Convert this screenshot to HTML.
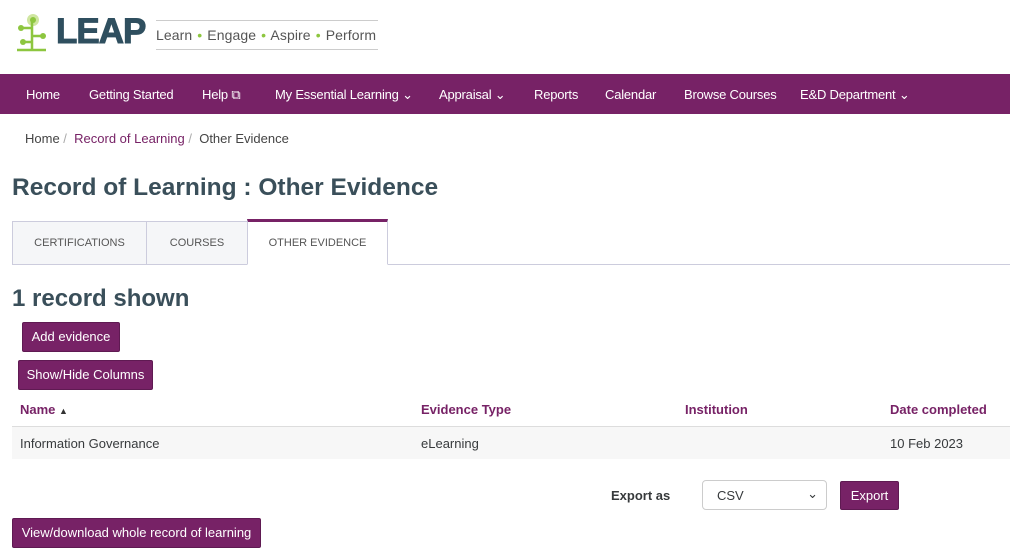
<!DOCTYPE html>
<html><head><meta charset="utf-8"><style>
*{box-sizing:border-box;margin:0;padding:0}
body{width:1010px;height:556px;overflow:hidden;background:#fff;font-family:"Liberation Sans",sans-serif;color:#373a3c;position:relative}
.a{position:absolute;white-space:nowrap}
.nav{position:absolute;top:74px;left:0;width:1010px;height:40px;background:#772266}
.nav span{position:absolute;top:13px;color:#fff;font-size:13px;letter-spacing:-0.2px}
.btn{position:absolute;background:#772266;color:#fff;font-size:13px;border:1px solid #5f1a52;border-radius:2px;text-align:center}
.th{position:absolute;top:402px;color:#772266;font-weight:bold;font-size:13px}
.tab{position:absolute;top:221px;height:44px;background:#f5f6f8;border:1px solid #ccd;font-size:11px;color:#555;text-align:center;line-height:42px}
</style></head><body>
<svg class="a" style="left:14px;top:14px" width="34" height="38" viewBox="0 0 34 38">
<circle cx="19" cy="6" r="6" fill="#cfe6a0"/>
<g stroke="#8dc63f" stroke-width="2.5" fill="none"><path d="M18 6V36M18 14H8M18 22H28M18 28H10M3 36H32"/></g>
<g fill="#8dc63f"><circle cx="19" cy="6" r="3"/><circle cx="7" cy="14" r="3"/><circle cx="29" cy="22" r="3"/><circle cx="9" cy="28" r="3"/></g>
</svg>
<div class="a" style="left:56px;top:12px;font-size:35px;font-weight:bold;color:#2f4f5f;letter-spacing:-1px;-webkit-text-stroke:1px #2f4f5f">LEAP</div>
<div class="a" style="left:156px;top:20px;width:222px;height:1px;background:#ccc"></div>
<div class="a" style="left:156px;top:49px;width:222px;height:1px;background:#ccc"></div>
<div class="a" style="left:156px;top:27px;font-size:14px;color:#555;letter-spacing:0.1px;word-spacing:1px">Learn <span style="color:#8dc63f">•</span> Engage <span style="color:#8dc63f">•</span> Aspire <span style="color:#8dc63f">•</span> Perform</div>
<div class="nav">
<span style="left:26px">Home</span><span style="left:89px">Getting Started</span><span style="left:202px">Help ⧉</span>
<span style="left:275px">My Essential Learning ⌄</span><span style="left:439px">Appraisal ⌄</span><span style="left:534px">Reports</span>
<span style="left:605px">Calendar</span><span style="left:684px">Browse Courses</span><span style="left:800px">E&amp;D Department ⌄</span>
</div>
<div class="a" style="left:25px;top:131px;font-size:13px;color:#444">Home <span style="color:#aaa">/</span>&nbsp; <span style="color:#772266">Record of Learning</span> <span style="color:#aaa">/</span>&nbsp; Other Evidence</div>
<div class="a" style="left:12px;top:174px;font-size:24.5px;font-weight:bold;color:#3a4f5a">Record of Learning : Other Evidence</div>
<div class="a" style="left:12px;top:264px;width:998px;height:1px;background:#ccd"></div>
<div class="tab" style="left:12px;width:135px">CERTIFICATIONS</div>
<div class="tab" style="left:146px;width:102px">COURSES</div>
<div class="tab" style="left:247px;width:141px;top:219px;height:46px;background:#fff;border-top:3px solid #772266;border-bottom:1px solid #fff">OTHER EVIDENCE</div>
<div class="a" style="left:12px;top:285px;font-size:24px;font-weight:bold;color:#3a4f5a">1 record shown</div>
<div class="btn" style="left:22px;top:322px;width:98px;height:30px;line-height:28px">Add evidence</div>
<div class="btn" style="left:18px;top:360px;width:135px;height:30px;line-height:28px">Show/Hide Columns</div>
<div class="th" style="left:20px">Name <span style="font-size:9px;color:#333">▲</span></div>
<div class="th" style="left:421px">Evidence Type</div>
<div class="th" style="left:685px">Institution</div>
<div class="th" style="left:890px">Date completed</div>
<div class="a" style="left:12px;top:426px;width:998px;height:33px;background:#f7f7f7;border-top:1px solid #ddd"></div>
<div class="a" style="left:20px;top:436px;font-size:13px">Information Governance</div>
<div class="a" style="left:421px;top:436px;font-size:13px">eLearning</div>
<div class="a" style="left:890px;top:436px;font-size:13px">10 Feb 2023</div>
<div class="a" style="left:611px;top:488px;font-size:13px;font-weight:bold">Export as</div>
<div class="a" style="left:702px;top:480px;width:125px;height:30px;border:1px solid #ccc;border-radius:4px;font-size:13px;padding:7px 14px">CSV<span style="position:absolute;right:8px;top:5px">⌄</span></div>
<div class="btn" style="left:840px;top:481px;width:59px;height:29px;line-height:27px">Export</div>
<div class="btn" style="left:12px;top:518px;width:249px;height:30px;line-height:28px">View/download whole record of learning</div>
</body></html>
